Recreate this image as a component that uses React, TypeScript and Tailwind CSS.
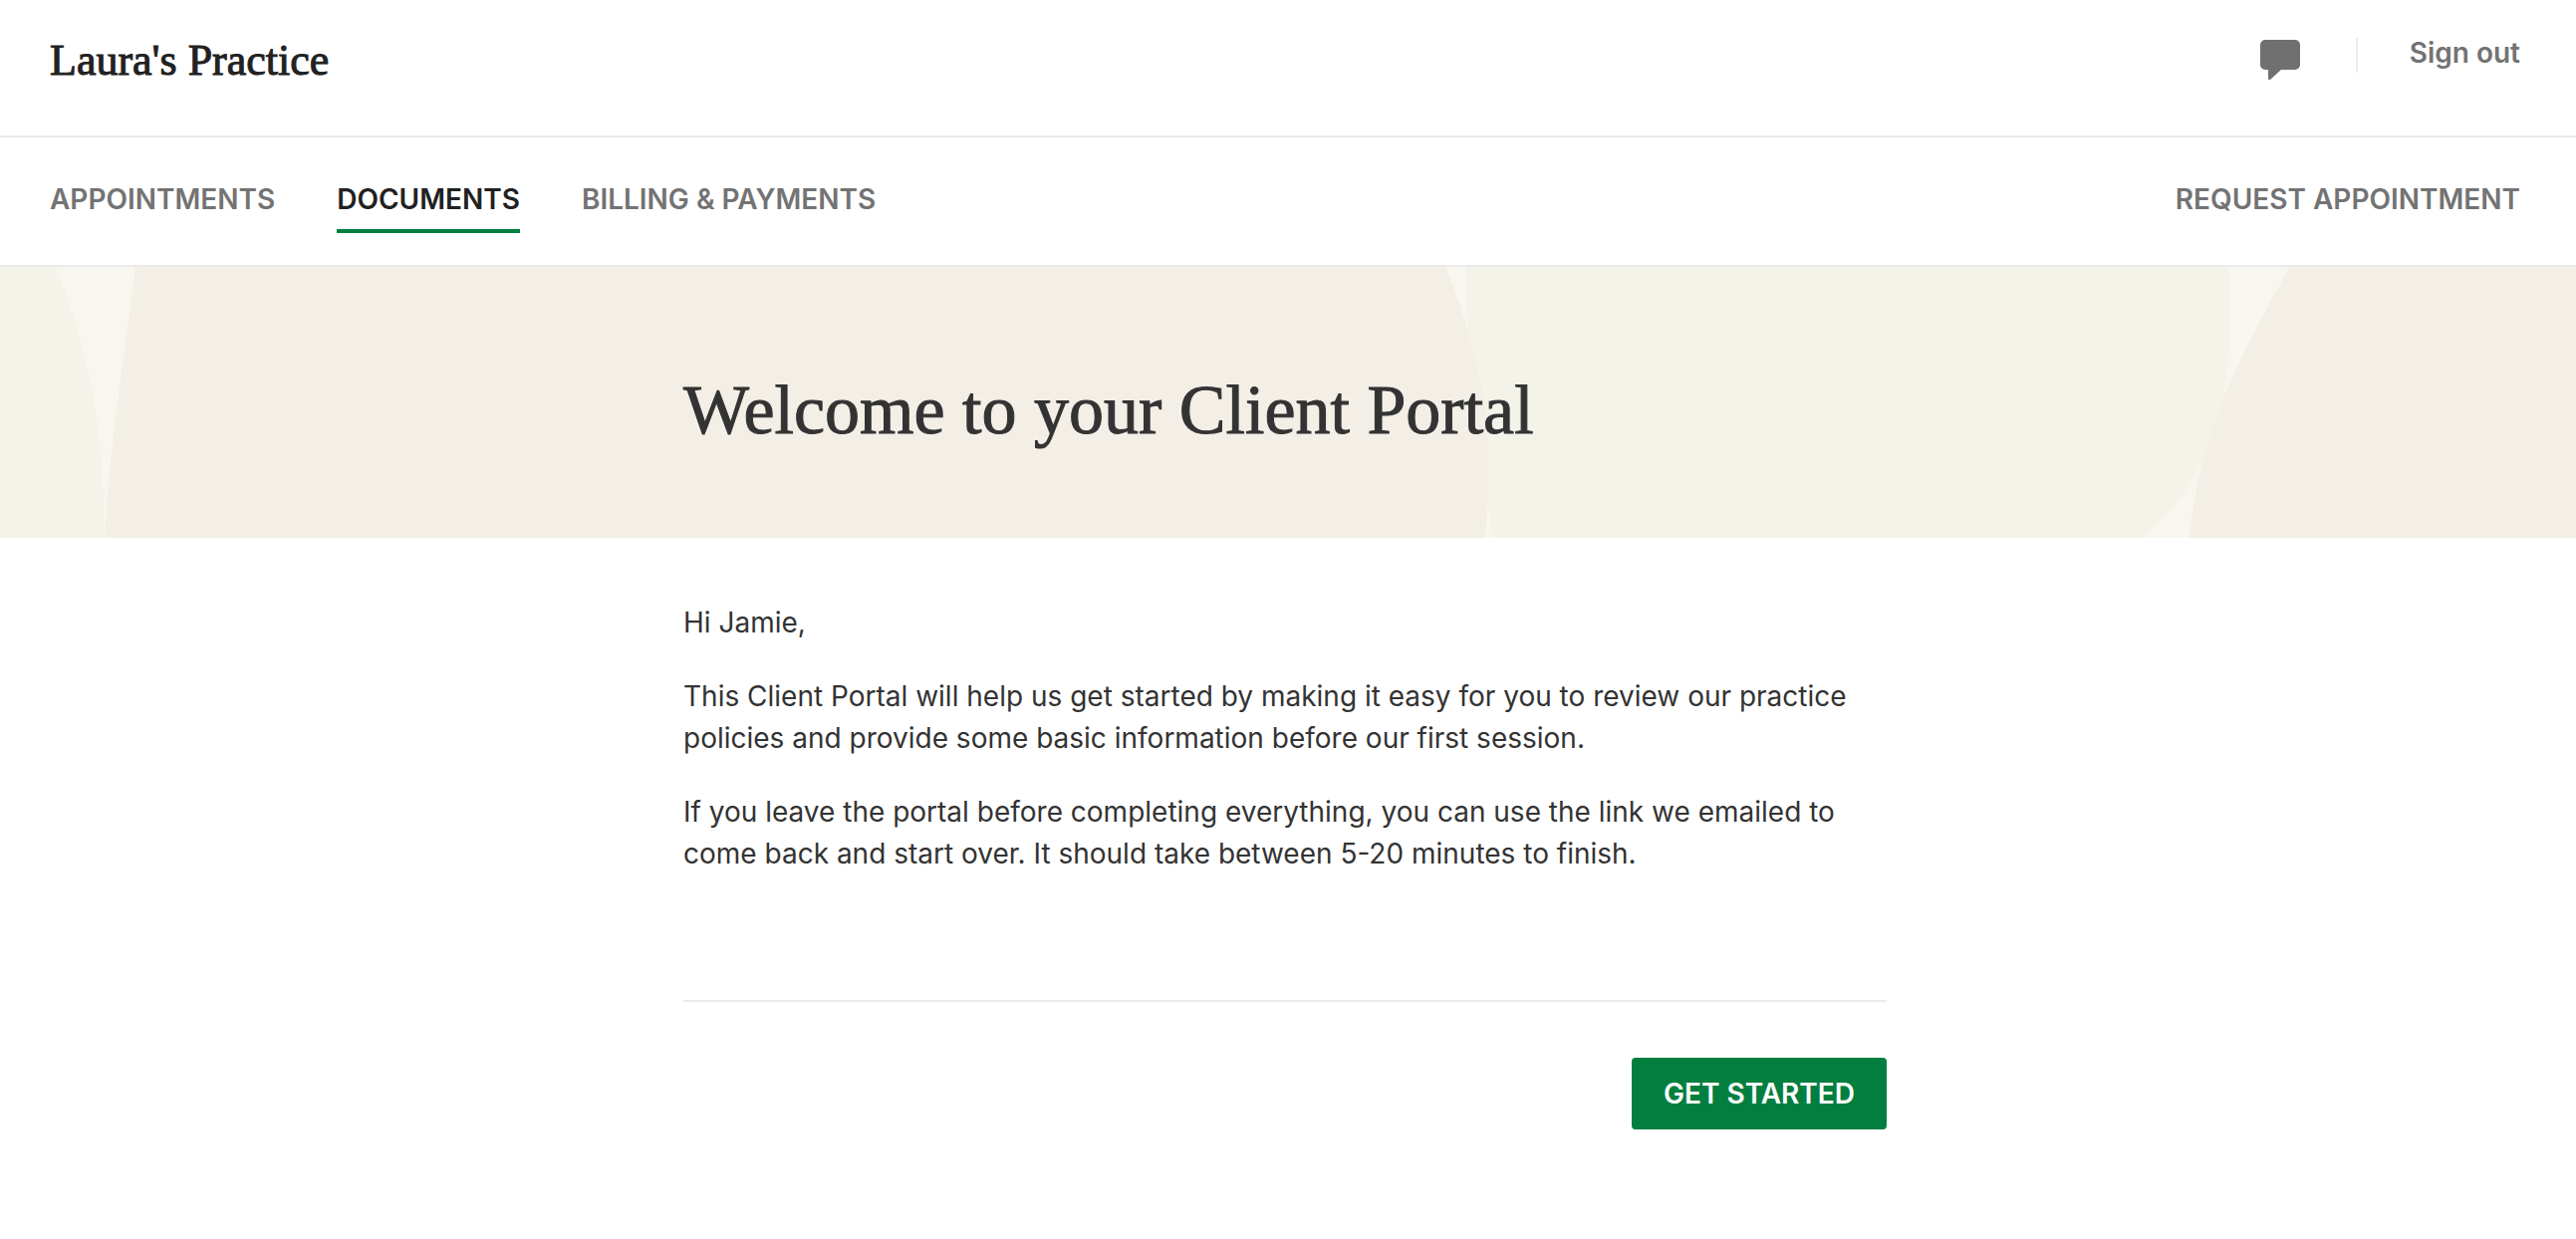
import React from "react";

const tabs = [
  { label: "APPOINTMENTS", active: false },
  { label: "DOCUMENTS", active: true },
  { label: "BILLING & PAYMENTS", active: false },
];

const paragraphs = [
  "Hi Jamie,",
  "This Client Portal will help us get started by making it easy for you to review our practice policies and provide some basic information before our first session.",
  "If you leave the portal before completing everything, you can use the link we emailed to come back and start over. It should take between 5-20 minutes to finish.",
];

function MessageIcon() {
  return (
    <svg viewBox="0 0 40 40" className="size-10" fill="#707070" aria-hidden="true">
      <path d="M5 0H35a5 5 0 0 1 5 5V25a5 5 0 0 1-5 5H21L10.600 39.400Q8 41 8 38.500V30H5a5 5 0 0 1-5-5V5a5 5 0 0 1 5-5Z" />
    </svg>
  );
}

function Header() {
  return (
    <header className="flex items-start justify-between border-b-2 border-[#ebebeb] pt-8 pr-14 pb-[50px] pl-[50px]">
      <a href="#home" className="pt-1 font-['Liberation_Serif',serif] text-[44px] leading-[50px] text-[#212121] [-webkit-text-stroke:1px_#212121]">
        Laura's Practice
      </a>
      <div className="flex items-start">
        <button type="button" aria-label="Messages" className="mt-2">
          <MessageIcon />
        </button>
        <div className="mt-1.5 ml-14 h-[35px] w-0.5 bg-[#ebebeb]" />
        <a href="#sign-out" className="ml-[52px] text-[28px] leading-[42px] font-semibold text-[#737373]">
          Sign out
        </a>
      </div>
    </header>
  );
}

function Navigation() {
  return (
    <nav className="flex items-start justify-between border-b-2 border-[#ebebeb] pt-10 pr-14 pb-8 pl-[50px] text-[28px] leading-[44px] font-semibold text-[#737373]">
      <div className="flex gap-[62px]">
        {tabs.map((tab) => (
          <a
            key={tab.label}
            href="#"
            aria-current={tab.active ? "page" : undefined}
            className={
              tab.active
                ? "border-b-4 border-[#027f3f] pb-2 text-[#212121]"
                : "border-b-4 border-transparent pb-2"
            }
          >
            {tab.label}
          </a>
        ))}
      </div>
      <a href="#request">REQUEST APPOINTMENT</a>
    </nav>
  );
}

function Hero() {
  return (
    <section className="relative overflow-hidden bg-[#f7f7f0] pt-[108px] pb-[92px]">
      <svg
        viewBox="0 0 2586 272"
        preserveAspectRatio="none"
        className="absolute inset-0 size-full"
        aria-hidden="true"
      >
        <path fill="#f3f3ea" d="M0 0H56C88 80 106 165 104 272H0Z" />
        <path fill="#f3f3ea" d="M1472 0H2237C2244 90 2236 210 2148 272H1499C1484 190 1472 100 1472 0Z" />
        <path fill="#f3eee6" d="M136 0H1451C1478 66 1494 130 1494 200C1494 225 1493 250 1491 272H105C109 190 126 80 136 0Z" />
        <path fill="#f3eee6" d="M2299 0H2586V272H2198C2208 165 2245 95 2299 0Z" />
      </svg>
      <div className="relative mx-auto w-full max-w-[1214px] pr-1.5">
        <h1 className="font-['Liberation_Serif',serif] text-[70px] leading-[72px] text-[#333333] [-webkit-text-stroke:1px_#333333]">
          Welcome to your Client Portal
        </h1>
      </div>
    </section>
  );
}

export default function App() {
  return (
    <div className="min-h-screen bg-white font-['Inter',sans-serif] text-[#333333]">
      <Header />
      <Navigation />
      <Hero />
      <main className="mx-auto w-full max-w-[1214px] pt-16 pr-1.5 pb-24">
        <div className="flex flex-col gap-8 text-[28px] leading-[42px]">
          {paragraphs.map((text) => (
            <p key={text}>{text}</p>
          ))}
        </div>
        <div className="mt-[126px] flex justify-end border-t-2 border-[#ebebeb] pt-14">
          <button
            type="button"
            className="rounded bg-[#027f3f] px-8 py-[15px] text-[28px] leading-[42px] font-semibold text-white"
          >
            GET STARTED
          </button>
        </div>
      </main>
    </div>
  );
}
